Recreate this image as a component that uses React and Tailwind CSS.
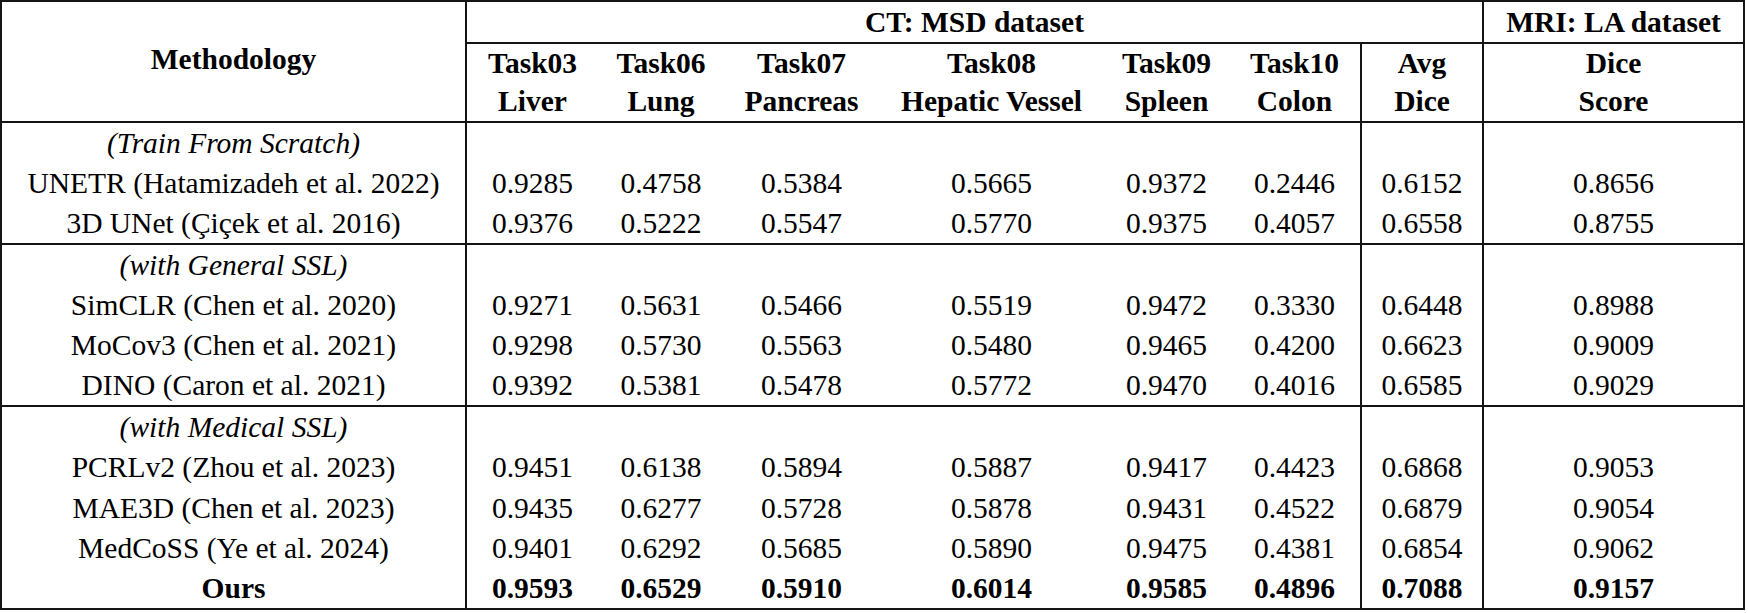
const groups = [
  {
    label: "(Train From Scratch)",
    rows: [
      ["UNETR (Hatamizadeh et al. 2022)", "0.9285", "0.4758", "0.5384", "0.5665", "0.9372", "0.2446", "0.6152", "0.8656"],
      ["3D UNet (Çiçek et al. 2016)", "0.9376", "0.5222", "0.5547", "0.5770", "0.9375", "0.4057", "0.6558", "0.8755"],
    ],
  },
  {
    label: "(with General SSL)",
    rows: [
      ["SimCLR (Chen et al. 2020)", "0.9271", "0.5631", "0.5466", "0.5519", "0.9472", "0.3330", "0.6448", "0.8988"],
      ["MoCov3 (Chen et al. 2021)", "0.9298", "0.5730", "0.5563", "0.5480", "0.9465", "0.4200", "0.6623", "0.9009"],
      ["DINO (Caron et al. 2021)", "0.9392", "0.5381", "0.5478", "0.5772", "0.9470", "0.4016", "0.6585", "0.9029"],
    ],
  },
  {
    label: "(with Medical SSL)",
    rows: [
      ["PCRLv2 (Zhou et al. 2023)", "0.9451", "0.6138", "0.5894", "0.5887", "0.9417", "0.4423", "0.6868", "0.9053"],
      ["MAE3D (Chen et al. 2023)", "0.9435", "0.6277", "0.5728", "0.5878", "0.9431", "0.4522", "0.6879", "0.9054"],
      ["MedCoSS (Ye et al. 2024)", "0.9401", "0.6292", "0.5685", "0.5890", "0.9475", "0.4381", "0.6854", "0.9062"],
    ],
    best: ["Ours", "0.9593", "0.6529", "0.5910", "0.6014", "0.9585", "0.4896", "0.7088", "0.9157"],
  },
];

const tasks = [
  ["Task03", "Liver"],
  ["Task06", "Lung"],
  ["Task07", "Pancreas"],
  ["Task08", "Hepatic Vessel"],
  ["Task09", "Spleen"],
  ["Task10", "Colon"],
];

// cells that carry a vertical rule on their right side
const ruled = [0, 6, 7];

function Row({ cells, bold, top }) {
  return (
    <tr className={`h-[40.6px] ${top ? "border-t-2 border-[#141414]" : ""}`}>
      {cells.map((c, i) => (
        <td
          key={i}
          className={`p-0 leading-[38px] text-center whitespace-nowrap ${bold ? "font-bold" : ""} ${
            ruled.includes(i) ? "border-r-2 border-[#141414]" : ""
          }`}
        >
          {c}
        </td>
      ))}
    </tr>
  );
}

export default function App() {
  return (
    <div className="w-[1748px] h-[613px] bg-white text-black font-['Liberation_Serif','Times_New_Roman',serif] text-[29.5px] leading-[40px]">
      <table className="table-fixed border-collapse border-2 border-[#141414] w-[1743px]">
        <colgroup>
          <col className="w-[465px]" />
          <col className="w-[132px]" />
          <col className="w-[126px]" />
          <col className="w-[155px]" />
          <col className="w-[225px]" />
          <col className="w-[125px]" />
          <col className="w-[132px]" />
          <col className="w-[122px]" />
          <col className="w-[261px]" />
        </colgroup>
        <thead>
          <tr className="h-[42px]">
            <th rowSpan={2} className="p-0 pb-[6px] font-bold border-r-2 border-b-2 border-[#141414]">
              Methodology
            </th>
            <th colSpan={7} className="p-0 font-bold border-r-2 border-b-2 border-[#141414]">
              CT: MSD dataset
            </th>
            <th className="p-0 font-bold border-b-2 border-[#141414]">MRI: LA dataset</th>
          </tr>
          <tr className="h-[79px]">
            {tasks.map(([t, organ], i) => (
              <th
                key={t}
                className={`p-0 align-top leading-[38px] font-bold whitespace-nowrap border-b-2 border-[#141414] ${
                  i === 5 ? "border-r-2" : ""
                }`}
              >
                <div>{t}</div>
                <div>{organ}</div>
              </th>
            ))}
            <th className="p-0 align-top leading-[38px] font-bold border-r-2 border-b-2 border-[#141414]">
              <div>Avg</div>
              <div>Dice</div>
            </th>
            <th className="p-0 align-top leading-[38px] font-bold border-b-2 border-[#141414]">
              <div>Dice</div>
              <div>Score</div>
            </th>
          </tr>
        </thead>
        <tbody>
          {groups.map((g, gi) => (
            <>
              <Row
                key={g.label}
                top={gi > 0}
                cells={[<span className="italic">{g.label}</span>, "", "", "", "", "", "", "", ""]}
              />
              {g.rows.map((r) => (
                <Row key={r[0]} cells={r} />
              ))}
              {g.best && <Row key="best" cells={g.best} bold />}
            </>
          ))}
        </tbody>
      </table>
    </div>
  );
}
